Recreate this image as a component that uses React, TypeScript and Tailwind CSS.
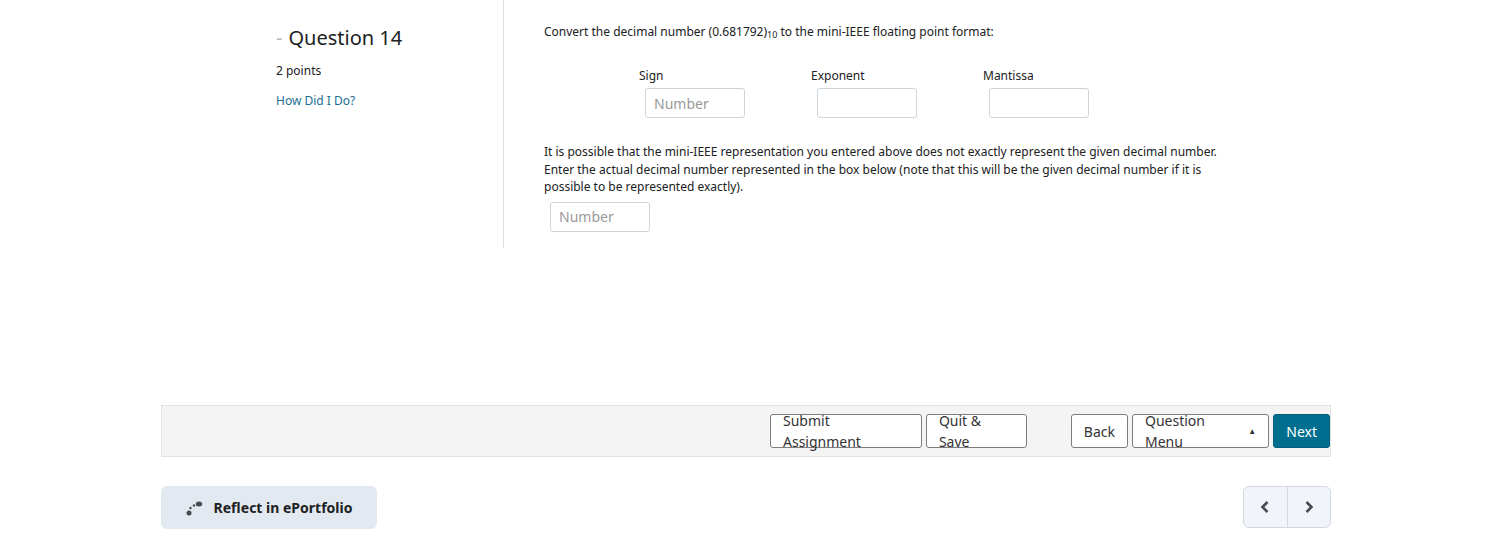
export default function App() {
  const inp = "w-[100px] h-[30px] border border-[#cdd5dc] rounded-[3px] px-2 text-[14px] text-[#999] flex items-center";
  const btn = "h-[34px] px-3 border border-[#7c7c7c] rounded-[3px] bg-white text-[14px] text-[#333] flex items-center";
  return (
    <div className="w-[1487px] h-[546px] bg-white text-[#202122] font-['Liberation_Sans',Arial,sans-serif]">
      <div className="flex h-[248px]">
        <div className="w-[228px] ml-[276px] border-r border-[#e0e0e0] pt-[24px]">
          <div className="text-[20px] leading-[28px] text-[#202122]"><span className="text-[#bbb] mr-[6px]">-</span>Question 14</div>
          <div className="text-[12px] mt-[10px]">2 points</div>
          <div className="text-[12px] mt-[12px] text-[#1d6e8f]">How Did I Do?</div>
        </div>
        <div className="pl-[40px] pt-[25px]">
          <div className="text-[12px] leading-[14px]">Convert the decimal number (0.681792)<sub className="text-[9px]">10</sub> to the mini-IEEE floating point format:</div>
          <div className="flex gap-[66px] ml-[95px] mt-[30px]">
            {["Sign","Exponent","Mantissa"].map((l,i)=>(
              <div key={l}>
                <div className="text-[12px] leading-[14px]">{l}</div>
                <div className={inp + " ml-[6px] mt-[5px]"}>{i===0?"Number":""}</div>
              </div>
            ))}
          </div>
          <p className="text-[12px] leading-[17.5px] w-[675px] mt-[25px]">It is possible that the mini-IEEE representation you entered above does not exactly represent the given decimal number. Enter the actual decimal number represented in the box below (note that this will be the given decimal number if it is possible to be represented exactly).</p>
          <div className={inp + " ml-[6px] mt-[6px]"}>Number</div>
        </div>
      </div>
      <div className="ml-[161px] w-[1170px] mt-[157px] h-[52px] bg-[#f4f4f4] border border-[#e3e3e3] flex items-center pl-[608px]">
        <div className={btn}>Submit Assignment</div>
        <div className={btn + " ml-[4px]"}>Quit &amp; Save</div>
        <div className={btn + " ml-[44px]"}>Back</div>
        <div className={btn + " ml-[4px]"}>Question Menu<span className="ml-[4px] text-[8px]">▲</span></div>
        <div className="h-[34px] px-3 ml-[4px] rounded-[3px] bg-[#006f8f] border border-[#005f7a] text-white text-[14px] flex items-center">Next</div>
      </div>
      <div className="ml-[161px] w-[1170px] mt-[29px] flex justify-between">
        <div className="w-[216px] h-[43px] rounded-[6px] bg-[#e3e9f1] flex items-center justify-center gap-[10px] font-['Lato',sans-serif] font-bold text-[14px] text-[#202122]">
          <svg width="18" height="16" viewBox="0 0 18 16"><circle cx="3" cy="13" r="2.5" fill="#494c4e"/><circle cx="4.5" cy="8" r="1.2" fill="#494c4e"/><circle cx="8" cy="5.5" r="1.2" fill="#494c4e"/><ellipse cx="13" cy="4" rx="3.2" ry="2.5" fill="#494c4e"/></svg>
          Reflect in ePortfolio
        </div>
        <div className="flex w-[88px] h-[42px] rounded-[6px] border border-[#d3d9e3] bg-[#f1f5fb]">
          <div className="flex-1 flex items-center justify-center border-r border-[#d3d9e3]">
            <svg width="10" height="14" viewBox="0 0 10 14"><path d="M7.5 2 L2.5 7 L7.5 12" stroke="#494c4e" strokeWidth="2.6" fill="none"/></svg>
          </div>
          <div className="flex-1 flex items-center justify-center">
            <svg width="10" height="14" viewBox="0 0 10 14"><path d="M2.5 2 L7.5 7 L2.5 12" stroke="#494c4e" strokeWidth="2.6" fill="none"/></svg>
          </div>
        </div>
      </div>
    </div>
  );
}
